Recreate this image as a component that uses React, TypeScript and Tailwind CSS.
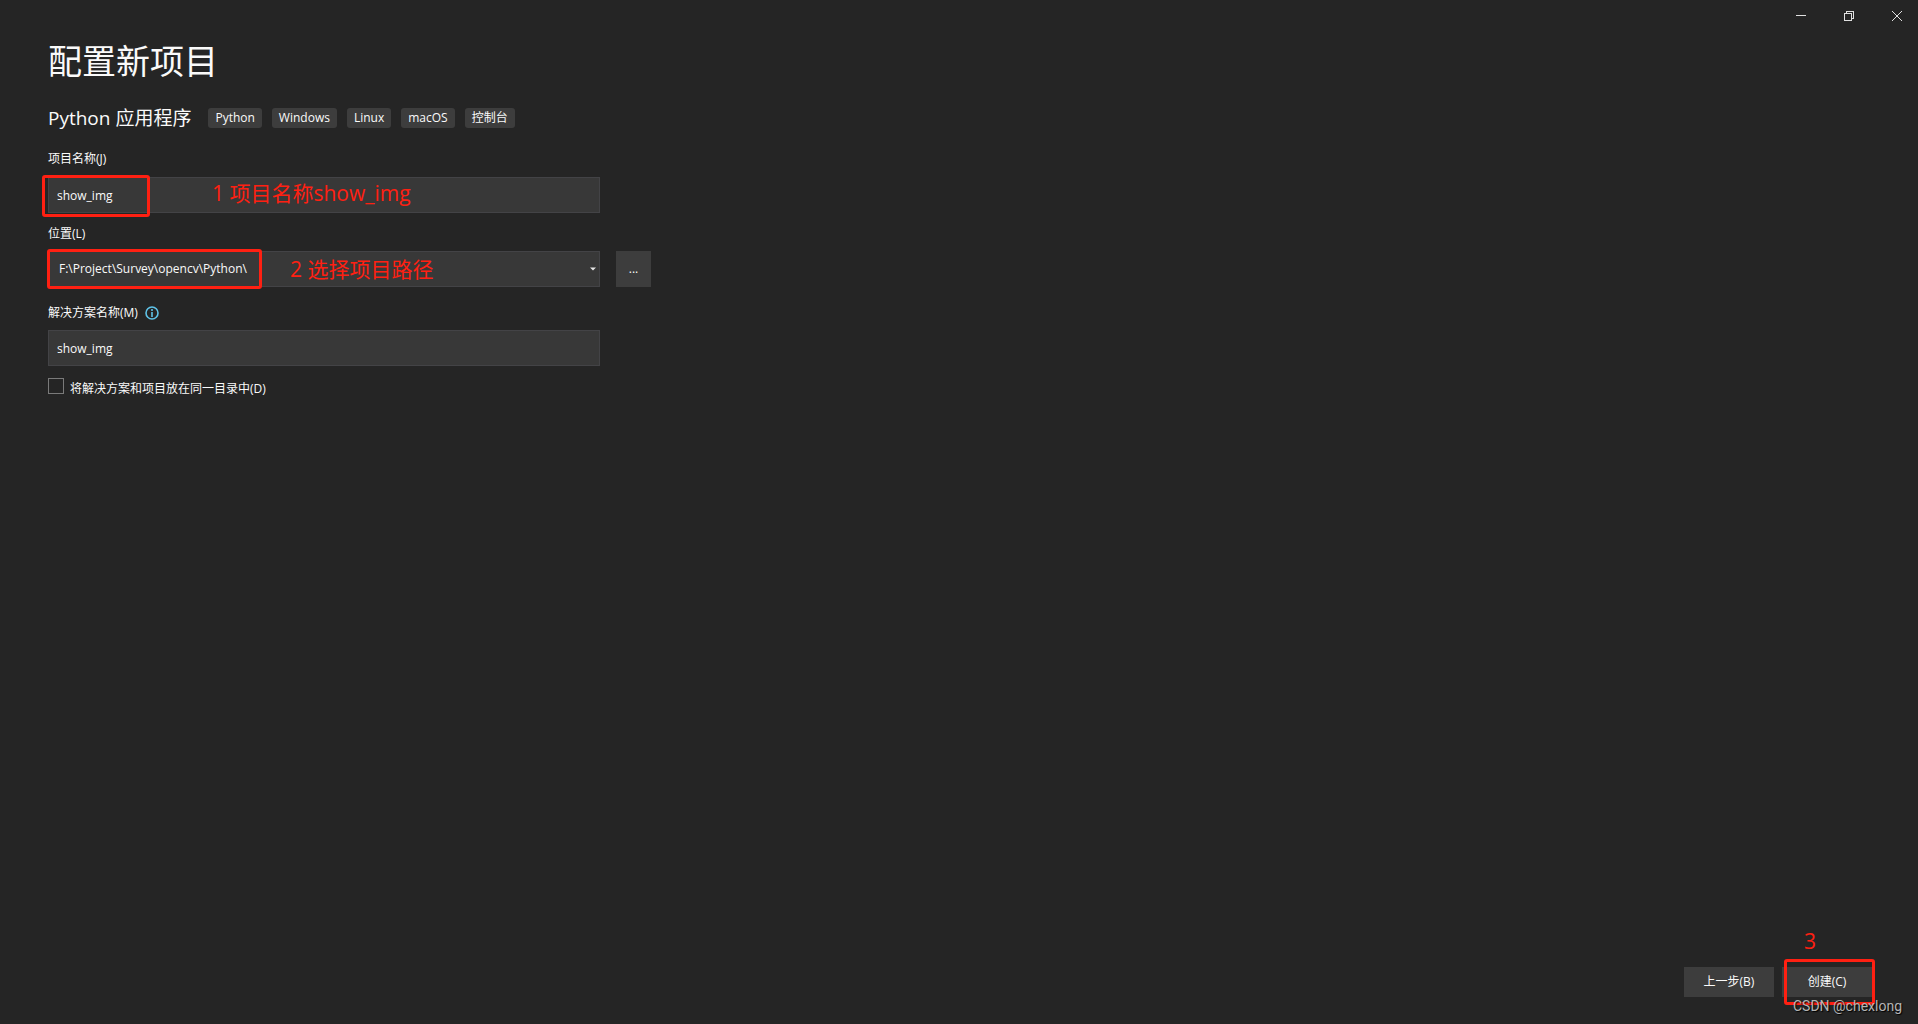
import React, { useState } from 'react';

const tags = ['Python', 'Windows', 'Linux', 'macOS', '控制台'];

function TitleBar() {
  return (
    <div className="flex h-8 justify-end gap-[6px] text-[#e0e0e0]">
      <button aria-label="最小化" className="flex w-[42px] items-center justify-center">
        <svg width="10" height="10" shapeRendering="crispEdges">
          <path d="M0 4.5h10" stroke="currentColor" />
        </svg>
      </button>
      <button aria-label="还原" className="flex w-[42px] items-center justify-center">
        <svg width="10" height="10" fill="none" stroke="currentColor" shapeRendering="crispEdges">
          <path d="M.5 2.5h7v7h-7zM2.5 2.5v-2h7v7h-2" />
        </svg>
      </button>
      <button aria-label="关闭" className="flex w-[42px] items-center justify-center">
        <svg width="10" height="10" stroke="currentColor">
          <path d="M0 0l10 10M10 0L0 10" />
        </svg>
      </button>
    </div>
  );
}

function InfoIcon() {
  return (
    <svg width="14" height="14" viewBox="0 0 14 14" fill="none" stroke="#5fc3e8">
      <circle cx="7" cy="7" r="6" strokeWidth="1.6" />
      <path d="M7 6v5M7 3v2" strokeWidth="1.6" />
    </svg>
  );
}

function App() {
  const [name, setName] = useState('show_img');
  const [solution, setSolution] = useState('show_img');

  return (
    <div className="flex min-h-screen flex-col bg-[#252525] font-['Open_Sans','Noto_Sans_CJK_SC',sans-serif] text-xs text-[#fafafa]">
      <TitleBar />

      <main className="flex-1 px-12">
        <h1 className="mt-1 text-[34px] leading-[50px]">配置新项目</h1>

        {/* Template name and tags */}
        <div className="mt-[18px] flex items-center gap-[17px]">
          <h2 className="text-[19px] leading-7">Python 应用程序</h2>
          <ul className="flex gap-[10px]">
            {tags.map((tag) => (
              <li key={tag} className="h-5 rounded-[3px] bg-[#3d3d3d] px-[7px] leading-5">{tag}</li>
            ))}
          </ul>
        </div>

        {/* Project name */}
        <div className="mt-[19px] max-w-[552px]">
          <label htmlFor="name" className="block leading-4">项目名称(J)</label>
          <div className="relative mt-[10px]">
            <input
              id="name"
              value={name}
              onChange={(e) => setName(e.target.value)}
              className="block h-9 w-full border border-[#434346] bg-[#383838] px-2 outline-none"
            />
            <div className="pointer-events-none absolute -left-[6px] -top-[2px] h-[42px] w-[108px] rounded-[3px] border-3 border-[#ff2012]" />
            <span className="pointer-events-none absolute left-[164px] top-0 text-[21px] leading-8 text-[#ff2012]">1 项目名称show_img</span>
          </div>
        </div>

        {/* Location */}
        <div className="mt-[13px] max-w-[603px]">
          <label htmlFor="location" className="block leading-4">位置(L)</label>
          <div className="mt-[9px] flex gap-4">
            <div className="relative flex-1">
              <select
                id="location"
                className="block h-9 w-full appearance-none border border-[#434346] bg-[#383838] px-[10px] outline-none"
              >
                <option>F:\Project\Survey\opencv\Python\</option>
              </select>
              <svg className="pointer-events-none absolute right-1 top-4" width="6" height="4">
                <path d="M0 .5h6L3 3.5z" fill="#e6e6e6" />
              </svg>
              <div className="pointer-events-none absolute -left-px -top-[2px] h-10 w-[215px] rounded-[3px] border-3 border-[#ff2012]" />
              <span className="pointer-events-none absolute left-[242px] top-0 text-[21px] leading-9 text-[#ff2012]">2 选择项目路径</span>
            </div>
            <button className="h-9 w-[35px] bg-[#3d3d3d]">...</button>
          </div>
        </div>

        {/* Solution name */}
        <div className="mt-[18px] max-w-[552px]">
          <div className="flex items-center gap-[7px]">
            <label htmlFor="solution" className="leading-4">解决方案名称(M)</label>
            <InfoIcon />
          </div>
          <input
            id="solution"
            value={solution}
            onChange={(e) => setSolution(e.target.value)}
            className="mt-[9px] block h-9 w-full border border-[#434346] bg-[#383838] px-2 outline-none"
          />
        </div>

        <div className="mt-3 flex gap-[6px]">
          <input id="same-dir" type="checkbox" className="size-4 appearance-none border border-[#7a7a7a] checked:bg-[#5fc3e8]" />
          <label htmlFor="same-dir" className="mt-[3px] leading-4">将解决方案和项目放在同一目录中(D)</label>
        </div>
      </main>

      <footer className="relative flex justify-end gap-2 pb-[27px] pr-[46px]">
        <button className="h-[30px] w-[90px] bg-[#3d3d3d]">上一步(B)</button>
        <div className="relative">
          <button className="h-[30px] w-[90px] bg-[#3d3d3d]">创建(C)</button>
          <div className="pointer-events-none absolute -top-2 left-[2px] h-[46px] w-[91px] rounded-[3px] border-3 border-[#ff2012]" />
          <span className="pointer-events-none absolute -top-10 left-[22px] text-[21px] leading-7 text-[#ff2012]">3</span>
        </div>
        <span className="absolute bottom-2 right-4 font-[Roboto,sans-serif] text-sm leading-5 text-[#b4b4b4] [text-shadow:1px_1px_1px_#000]">CSDN @chexlong</span>
      </footer>
    </div>
  );
}

export default App;
